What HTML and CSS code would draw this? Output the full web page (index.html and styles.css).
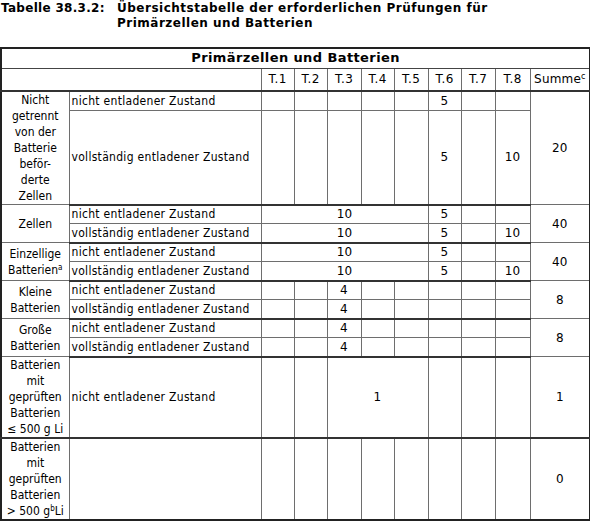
FILE: index.html
```html
<!DOCTYPE html>
<html lang="de">
<head>
<meta charset="utf-8">
<title>Tabelle 38.3.2</title>
<link rel="stylesheet" href="styles.css">
</head>
<body>
<div class="caption">
  <div class="cap-label">Tabelle 38.3.2:</div>
  <div class="cap-text">Übersichtstabelle der erforderlichen Prüfungen für<br>Primärzellen und Batterien</div>
</div>
<table class="tbl">
  <colgroup>
    <col class="c-a"><col class="c-b">
    <col class="c-t33"><col class="c-t33"><col class="c-t34"><col class="c-t33"><col class="c-t34"><col class="c-t33"><col class="c-t34">
    <col class="c-t35"><col class="c-s">
  </colgroup>
  <tr class="r-h1"><th colspan="11" class="head">Primärzellen und Batterien</th></tr>
  <tr class="r-h2 grp">
    <td colspan="2"></td>
    <td class="num">T.1</td><td class="num">T.2</td><td class="num">T.3</td><td class="num">T.4</td><td class="num">T.5</td><td class="num">T.6</td><td class="num">T.7</td><td class="num">T.8</td>
    <td class="num">Summe<sup>c</sup></td>
  </tr>

  <tr class="r-s">
    <td rowspan="2" class="lbl">Nicht<br>getrennt<br>von der<br>Batterie<br>beför-<br>derte<br>Zellen</td>
    <td class="desc">nicht entladener Zustand</td>
    <td></td><td></td><td></td><td></td><td></td><td class="num">5</td><td></td><td></td>
    <td rowspan="2" class="num">20</td>
  </tr>
  <tr class="r-ng grp">
    <td class="desc">vollständig entladener Zustand</td>
    <td></td><td></td><td></td><td></td><td></td><td class="num">5</td><td></td><td class="num">10</td>
  </tr>

  <tr class="r-s">
    <td rowspan="2" class="lbl">Zellen</td>
    <td class="desc">nicht entladener Zustand</td>
    <td colspan="5" class="num">10</td><td class="num">5</td><td></td><td></td>
    <td rowspan="2" class="num">40</td>
  </tr>
  <tr class="r-s grp">
    <td class="desc">vollständig entladener Zustand</td>
    <td colspan="5" class="num">10</td><td class="num">5</td><td></td><td class="num">10</td>
  </tr>

  <tr class="r-s">
    <td rowspan="2" class="lbl">Einzellige<br>Batterien<sup>a</sup></td>
    <td class="desc">nicht entladener Zustand</td>
    <td colspan="5" class="num">10</td><td class="num">5</td><td></td><td></td>
    <td rowspan="2" class="num">40</td>
  </tr>
  <tr class="r-s grp">
    <td class="desc">vollständig entladener Zustand</td>
    <td colspan="5" class="num">10</td><td class="num">5</td><td></td><td class="num">10</td>
  </tr>

  <tr class="r-s">
    <td rowspan="2" class="lbl">Kleine<br>Batterien</td>
    <td class="desc">nicht entladener Zustand</td>
    <td></td><td></td><td class="num">4</td><td></td><td></td><td></td><td></td><td></td>
    <td rowspan="2" class="num">8</td>
  </tr>
  <tr class="r-s grp">
    <td class="desc">vollständig entladener Zustand</td>
    <td></td><td></td><td class="num">4</td><td></td><td></td><td></td><td></td><td></td>
  </tr>

  <tr class="r-s">
    <td rowspan="2" class="lbl">Große<br>Batterien</td>
    <td class="desc">nicht entladener Zustand</td>
    <td></td><td></td><td class="num">4</td><td></td><td></td><td></td><td></td><td></td>
    <td rowspan="2" class="num">8</td>
  </tr>
  <tr class="r-s grp">
    <td class="desc">vollständig entladener Zustand</td>
    <td></td><td></td><td class="num">4</td><td></td><td></td><td></td><td></td><td></td>
  </tr>

  <tr class="r-l grp">
    <td class="lbl">Batterien<br>mit<br>geprüften<br>Batterien<br>≤ 500 g Li</td>
    <td class="desc">nicht entladener Zustand</td>
    <td></td><td></td><td colspan="3" class="num">1</td><td></td><td></td><td></td>
    <td class="num">1</td>
  </tr>

  <tr class="r-m">
    <td class="lbl">Batterien<br>mit<br>geprüften<br>Batterien<br>&gt; 500 g<sup>b</sup>Li</td>
    <td class="desc"></td>
    <td></td><td></td><td></td><td></td><td></td><td></td><td></td><td></td>
    <td class="num">0</td>
  </tr>
</table>
</body>
</html>
```

FILE: styles.css
```css
html, body {
  margin: 0;
  padding: 0;
  background: #ffffff;
}

body {
  font-family: "DejaVu Sans Condensed", "DejaVu Sans", sans-serif;
  font-stretch: condensed;
  font-size: 12px;
  color: #000;
  width: 590px;
}

.caption {
  display: flex;
  font-family: "DejaVu Sans", sans-serif;
  font-stretch: normal;
  font-weight: bold;
  font-size: 12px;
  letter-spacing: 0.5px;
  line-height: 15px;
  padding: 1px 0 0 1px;
  height: 31px;
  margin-bottom: 15px;
}

.cap-label {
  width: 116px;
  flex: none;
  letter-spacing: 0.3px;
}

.tbl {
  border-collapse: collapse;
  table-layout: fixed;
  width: 589px;
  border: 2px solid #222;
  line-height: 16px;
  letter-spacing: 0.3px;
}

.c-a { width: 68px; }
.c-b { width: 192px; }
.c-t33 { width: 33px; }
.c-t34 { width: 34px; }
.c-t35 { width: 35px; }
.c-s { width: 60px; }

.tbl td, .tbl th {
  border: 1px solid #6e6e6e;
  padding: 0 2px;
  vertical-align: middle;
  white-space: nowrap;
  overflow: hidden;
}

.tbl tr.grp > td {
  border-bottom: 2px solid #333;
}

.tbl .head {
  font-family: "DejaVu Sans", sans-serif;
  font-stretch: normal;
  font-weight: bold;
  font-size: 13px;
  letter-spacing: 0.4px;
  text-align: center;
  border-bottom: 1px solid #444;
}

.r-h1 { height: 20px; }
.r-h2 { height: 23px; }
.r-s { height: 19px; }
.r-ng { height: 94px; }
.r-l { height: 81px; }
.r-m { height: 81px; }

.num {
  text-align: center;
  font-family: "DejaVu Sans", sans-serif;
  font-stretch: normal;
  letter-spacing: 0.2px;
}

.lbl {
  text-align: center;
  padding: 0;
  letter-spacing: 0;
}

.desc {
  text-align: left;
  padding-left: 4px;
}

sup {
  font-size: 8px;
  line-height: 0;
  vertical-align: 4px;
  letter-spacing: 0;
}
```
